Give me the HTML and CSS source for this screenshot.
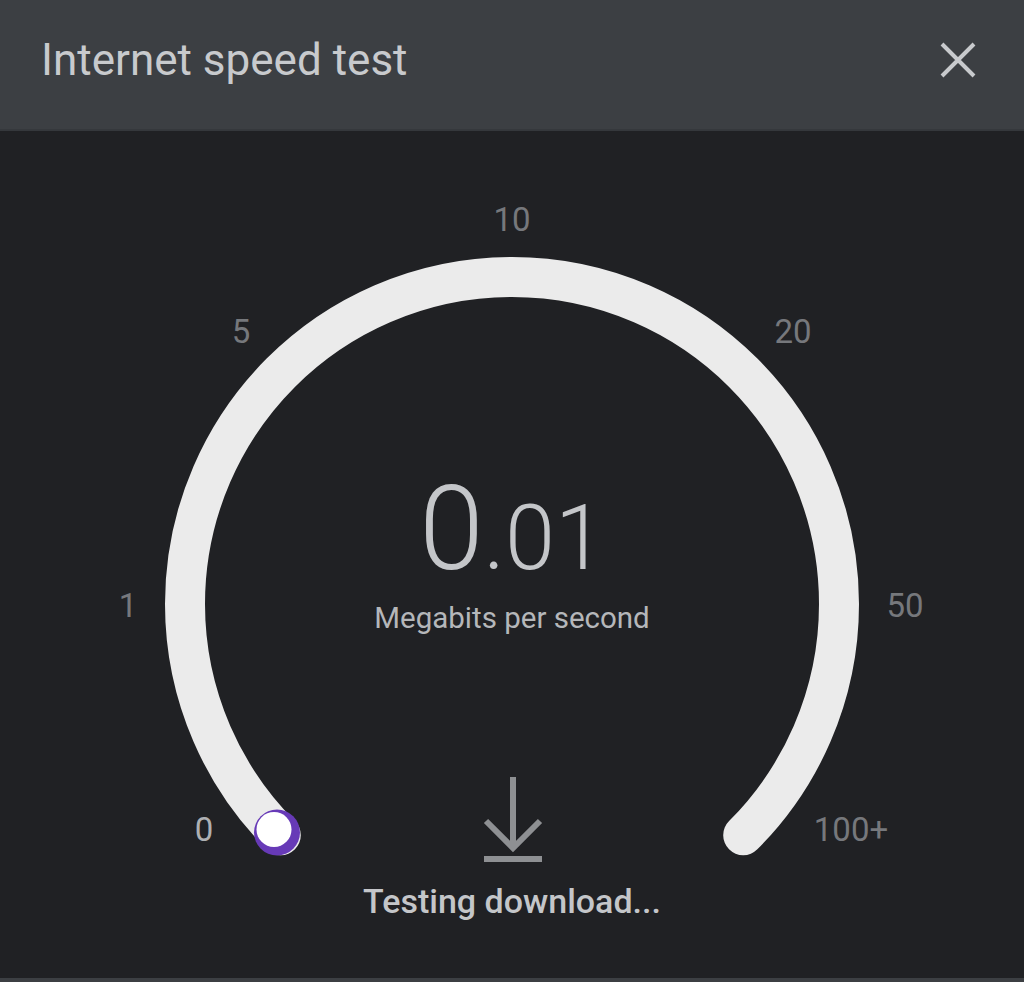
FILE: index.html
```html
<!DOCTYPE html>
<html lang="en">
<head>
    <meta charset="UTF-8">
    <meta name="viewport" content="width=device-width, initial-scale=1.0">
    <title>Internet speed test</title>
    <link rel="stylesheet" href="styles.css">
</head>
<body>
    <div class="dialog">
        <header class="dialog-header">
            <h1>Internet speed test</h1>
            <button class="close-button" aria-label="Close">
                <svg width="36" height="36" viewBox="0 0 36 36">
                    <path d="M2 2 L34 34 M34 2 L2 34" stroke="currentColor" stroke-width="4" fill="none"/>
                </svg>
            </button>
        </header>

        <main class="gauge-area">
            <svg class="gauge" width="1024" height="847" viewBox="0 131 1024 847">
                <path d="M 280.8 835.2 A 327 327 0 1 1 743.2 835.2" stroke="#ebebeb" stroke-width="40" stroke-linecap="round" fill="none"/>

                <g class="tick-labels">
                    <text x="204" y="829" class="tick active">0</text>
                    <text x="128" y="605">1</text>
                    <text x="241" y="331">5</text>
                    <text x="512" y="219">10</text>
                    <text x="793" y="331">20</text>
                    <text x="905" y="605">50</text>
                    <text x="851" y="829">100+</text>
                </g>

                <circle cx="277" cy="832.5" r="23" fill="#673ab7"/>
                <circle cx="274" cy="829.5" r="17.5" fill="#ffffff"/>
            </svg>

            <div class="readout">
                <div class="value"><span class="whole">0</span><span class="fraction">.01</span></div>
                <div class="unit">Megabits per second</div>
            </div>

            <div class="status">
                <svg width="62" height="86" viewBox="0 0 62 86">
                    <path d="M31 0 V70 M4 44 L31 71 L58 44" stroke="currentColor" stroke-width="6" fill="none"/>
                    <rect x="2" y="79" width="58" height="6" fill="currentColor"/>
                </svg>
                <div class="status-text">Testing download...</div>
            </div>
        </main>
    </div>
</body>
</html>
```

FILE: styles.css
```css
* {
    box-sizing: border-box;
}

body {
    margin: 0;
    background: #202124;
    font-family: Roboto, 'Noto Sans', sans-serif;
    overflow: hidden;
}

.dialog {
    width: 1024px;
    height: 982px;
    display: flex;
    flex-direction: column;
    border-bottom: 4px solid #3c3f43;
}

.dialog-header {
    height: 131px;
    flex-shrink: 0;
    display: flex;
    align-items: center;
    justify-content: space-between;
    padding: 0 48px 9px 41px;
    background: #3c3f43;
    border-bottom: 2px solid #35383c;
}

.dialog-header h1 {
    margin: 0;
    font-size: 44px;
    font-weight: 400;
    color: #c8cacd;
}

.close-button {
    background: none;
    border: none;
    padding: 0;
    color: #c8cacd;
    display: flex;
    cursor: pointer;
}

.gauge-area {
    position: relative;
    flex: 1;
}

.gauge {
    display: block;
}

.tick-labels text {
    font-family: Roboto, sans-serif;
    font-size: 33px;
    fill: #76787c;
    text-anchor: middle;
    dominant-baseline: central;
}

.tick-labels .active {
    fill: #aeb0b3;
}

.readout {
    position: absolute;
    left: 0;
    right: 0;
    top: 340px;
    text-align: center;
    color: #c4c6c9;
}

.value {
    font-weight: 300;
    line-height: 1;
}

.whole {
    font-size: 116px;
}

.fraction {
    font-size: 90px;
}

.unit {
    margin-top: 14px;
    font-size: 29.5px;
    color: #b5b7ba;
}

.status {
    position: absolute;
    left: 0;
    right: 0;
    top: 646px;
    display: flex;
    flex-direction: column;
    align-items: center;
    color: #8e9093;
}

.status svg {
    margin-left: 2px;
}

.status-text {
    margin-top: 18px;
    font-size: 34px;
    font-weight: 500;
    color: #c4c6c9;
}
```
